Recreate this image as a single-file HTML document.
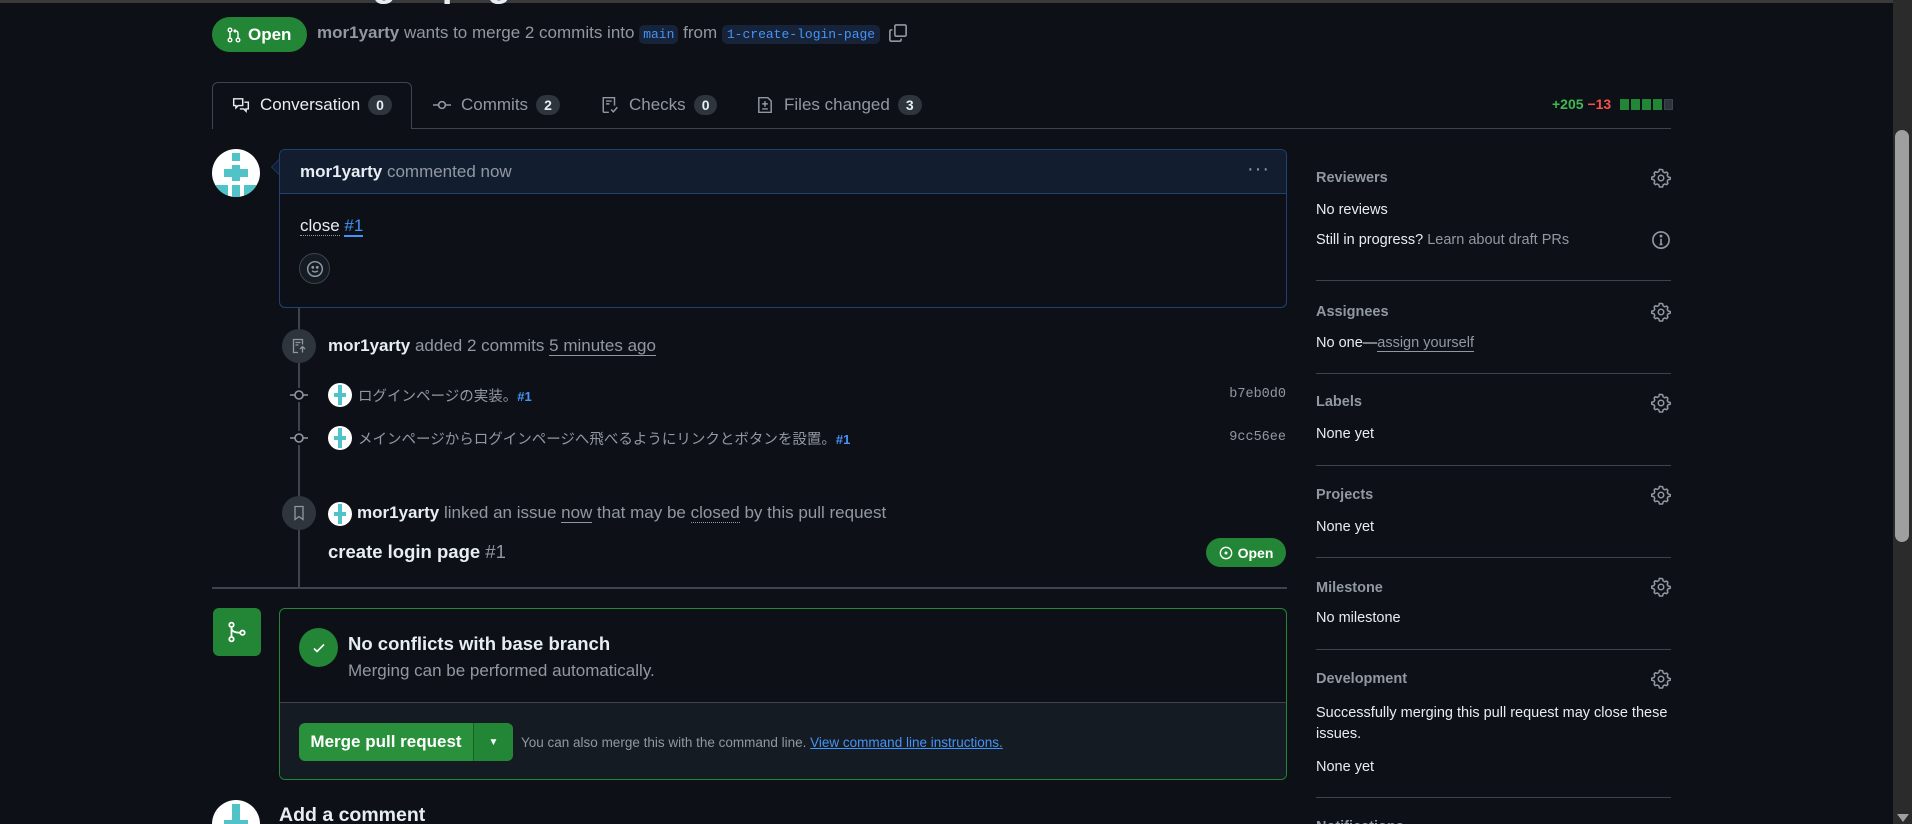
<!DOCTYPE html>
<html><head><meta charset="utf-8"><style>
*{box-sizing:border-box;margin:0;padding:0}
html{width:1912px;height:824px;overflow:hidden;background:#0d1117}
body{width:1912px;height:824px;overflow:hidden;background:#0d1117;color:#e6edf3;font-family:"Liberation Sans","Noto Sans CJK JP",sans-serif;font-size:17px;position:relative}
.a{position:absolute}
.mut{color:#9198a1}
.b{font-weight:bold}
.blue{color:#4493f8}
.mono{font-family:"Liberation Mono",monospace}
.cnt{display:inline-block;background:#2f353d;color:#e6edf3;border-radius:12px;font-size:14px;padding:2px 8px;margin-left:8px;font-weight:bold}
.tab{position:absolute;top:82px;height:46px;display:flex;align-items:center;color:#9198a1;font-size:17px}
.tab svg{margin-right:10px}
.sh{position:absolute;left:1316px;font-size:14.5px;color:#9198a1;font-weight:bold}
.sv{position:absolute;left:1316px;font-size:14.5px;color:#e6edf3}
.dv{position:absolute;left:1316px;width:355px;height:1px;background:#3d444d}
.gear{position:absolute;left:1651px}
.av{position:absolute;border-radius:50%;background:#fff;overflow:hidden}
</style></head><body>
<div class="a" style="left:0;top:0;width:1912px;height:3px;background:#3a3a3a"></div>
<div class="a b" style="left:212px;top:-38px;font-size:39px;color:#e6edf3">create login page <span class="mut" style="font-weight:normal">#2</span></div>

<div class="a" style="left:212px;top:17px;width:95px;height:35px;border-radius:18px;background:#238636;color:#fff;font-weight:bold;display:flex;align-items:center;padding-left:14px;font-size:17px">
<svg width="16" height="16" viewBox="0 0 16 16" fill="none" stroke="#fff" stroke-width="1.4" style="margin-right:6px"><circle cx="4" cy="3" r="1.8"/><circle cx="4" cy="13" r="1.8"/><circle cx="12" cy="13" r="1.8"/><path d="M4 5v6M12 11V6a2 2 0 0 0-2-2H8M9.5 2.5 8 4l1.5 1.5"/></svg>Open</div>
<div class="a mut" style="left:317px;top:23px;font-size:17px"><span class="b" style="color:#9198a1">mor1yarty</span> wants to merge 2 commits into <span class="mono blue" style="background:#172339;padding:2px 4px;border-radius:5px;font-size:13px">main</span> from <span class="mono blue" style="background:#172339;padding:2px 5px;border-radius:5px;font-size:13px">1-create-login-page</span></div>
<svg class="a" style="left:888px;top:23px" width="20" height="20" viewBox="0 0 16 16" fill="none" stroke="#9198a1" stroke-width="1.3"><rect x="5.5" y="1.5" width="9" height="9" rx="1"/><path d="M3.5 5.5h-1a1 1 0 0 0-1 1v7a1 1 0 0 0 1 1h7a1 1 0 0 0 1-1v-1"/></svg>

<div class="a" style="left:212px;top:82px;width:200px;height:47px;border:1px solid #3d444d;border-bottom:none;border-radius:6px 6px 0 0;background:#0d1117;z-index:2"></div>
<div class="a" style="left:212px;top:128px;width:1459px;height:1px;background:#3d444d"></div>
<div class="tab" style="left:232px;color:#e6edf3;z-index:3"><svg width="18" height="18" viewBox="0 0 16 16" fill="none" stroke="#e6edf3" stroke-width="1.3"><path d="M1.5 2.5h8v6h-4l-2 2v-2h-2z"/><path d="M11 5.5h3.5v6h-2v2l-2-2H7"/></svg>Conversation<span class="cnt">0</span></div>
<div class="tab" style="left:433px"><svg width="18" height="18" viewBox="0 0 16 16" fill="none" stroke="#9198a1" stroke-width="1.4"><circle cx="8" cy="8" r="3"/><path d="M0 8h5M11 8h5"/></svg>Commits<span class="cnt">2</span></div>
<div class="tab" style="left:601px"><svg width="18" height="18" viewBox="0 0 16 16" fill="none" stroke="#9198a1" stroke-width="1.3"><path d="M7 14.5H3a1 1 0 0 1-1-1v-12h10v7M4.5 4.5h5M4.5 7h3M9 12l2 2 3.5-4"/></svg>Checks<span class="cnt">0</span></div>
<div class="tab" style="left:756px"><svg width="18" height="18" viewBox="0 0 16 16" fill="none" stroke="#9198a1" stroke-width="1.3"><path d="M2.5 1.5h8l3 3v10h-11z M8 4.5v5M5.5 7h5M5.5 11.5h5"/></svg>Files changed<span class="cnt">3</span></div>
<div class="a b" style="left:1552px;top:96px;font-size:14px"><span style="color:#3fb950">+205</span> <span style="color:#f85149">−13</span></div>
<div class="a" style="left:1620px;top:99px;display:flex;gap:2px"><i style="width:9px;height:11px;background:#238636"></i><i style="width:9px;height:11px;background:#238636"></i><i style="width:9px;height:11px;background:#238636"></i><i style="width:9px;height:11px;background:#238636"></i><i style="width:9px;height:11px;background:#2f353d;border:1px solid #3d444d"></i></div>

<div class="av" style="left:212px;top:149px;width:48px;height:48px"><svg width="48" height="48" viewBox="0 0 12 12"><rect x="5" y="1" width="2" height="10" fill="#4fc3c8"/><rect x="3" y="5" width="6" height="2" fill="#4fc3c8"/><rect x="0" y="9" width="12" height="3" fill="#4fc3c8"/><rect x="5" y="3" width="2" height="1" fill="#fff"/><rect x="5" y="8" width="2" height="1" fill="#fff"/><rect x="4" y="9" width="1" height="3" fill="#fff"/><rect x="7" y="9" width="1" height="3" fill="#fff"/></svg></div>

<div class="a" style="left:279px;top:149px;width:1008px;height:159px;border:1px solid #1f4273;border-radius:6px;overflow:hidden">
<div style="height:44px;background:#121d2f;border-bottom:1px solid #1f4273;display:flex;align-items:center;padding-left:20px"><span class="b">mor1yarty</span>&nbsp;<span class="mut">commented now</span><span class="a mut" style="right:16px;top:8px;font-size:20px;letter-spacing:1px">···</span></div>
<div style="padding:22px 20px 0"><span style="border-bottom:1px dotted #9198a1">close</span> <span class="blue" style="border-bottom:2px solid #4493f8">#1</span></div>
<div style="margin:17px 0 0 19px;width:31px;height:31px;border-radius:50%;border:1px solid #3d444d;background:#151b23;display:flex;align-items:center;justify-content:center"><svg width="18" height="18" viewBox="0 0 16 16" fill="none" stroke="#9198a1" stroke-width="1.3"><circle cx="8" cy="8" r="6.5"/><path d="M5.5 9.5c1.3 1.5 3.7 1.5 5 0"/><circle cx="6" cy="6.5" r=".6" fill="#9198a1"/><circle cx="10" cy="6.5" r=".6" fill="#9198a1"/></svg></div>
</div>
<div class="a" style="left:263px;top:159px;width:0;height:0;border:8px solid transparent;border-right-color:#1f4273"></div>
<div class="a" style="left:265px;top:160px;width:0;height:0;border:7px solid transparent;border-right-color:#121d2f"></div>

<div class="a" style="left:298px;top:308px;width:2px;height:280px;background:#3d444d"></div>
<div class="a" style="left:282px;top:329px;width:34px;height:34px;border-radius:50%;background:#2f353d;display:flex;align-items:center;justify-content:center"><svg width="16" height="16" viewBox="0 0 16 16" fill="none" stroke="#9198a1" stroke-width="1.3"><path d="M7 14.5H2.5v-13h9v5M4.5 4.5h5M4.5 7h3M11.5 14.5v-6M9 11l2.5-2.5L14 11"/></svg></div>
<div class="a" style="left:328px;top:336px"><span class="b">mor1yarty</span> <span class="mut">added 2 commits <span style="border-bottom:1px solid #9198a1">5 minutes ago</span></span></div>

<div class="a" style="left:290px;top:388px;width:18px;height:14px;background:#0d1117"></div>
<svg class="a" style="left:290px;top:388px" width="18" height="14"><circle cx="9" cy="7" r="4" fill="none" stroke="#9198a1" stroke-width="1.6"/><path d="M0 7h5M13 7h5" stroke="#9198a1" stroke-width="1.6"/></svg>
<div class="av" style="left:328px;top:383px;width:24px;height:24px"><svg width="24" height="24" viewBox="0 0 12 12"><rect x="5" y="1" width="2" height="10" fill="#4fc3c8"/><rect x="3" y="5" width="6" height="2" fill="#4fc3c8"/></svg></div>
<div class="a mut" style="left:358px;top:385px;font-size:14.5px">ログインページの実装。<span class="blue b" style="font-size:13px">#1</span></div>
<div class="a mut mono" style="left:1180px;width:106px;text-align:right;top:387px;font-size:13.5px">b7eb0d0</div>

<div class="a" style="left:290px;top:431px;width:18px;height:14px;background:#0d1117"></div>
<svg class="a" style="left:290px;top:431px" width="18" height="14"><circle cx="9" cy="7" r="4" fill="none" stroke="#9198a1" stroke-width="1.6"/><path d="M0 7h5M13 7h5" stroke="#9198a1" stroke-width="1.6"/></svg>
<div class="av" style="left:328px;top:426px;width:24px;height:24px"><svg width="24" height="24" viewBox="0 0 12 12"><rect x="5" y="1" width="2" height="10" fill="#4fc3c8"/><rect x="3" y="5" width="6" height="2" fill="#4fc3c8"/></svg></div>
<div class="a mut" style="left:358px;top:428px;font-size:14.5px">メインページからログインページへ飛べるようにリンクとボタンを設置。<span class="blue b" style="font-size:13px">#1</span></div>
<div class="a mut mono" style="left:1180px;width:106px;text-align:right;top:430px;font-size:13.5px">9cc56ee</div>

<div class="a" style="left:282px;top:496px;width:34px;height:34px;border-radius:50%;background:#2f353d;display:flex;align-items:center;justify-content:center"><svg width="16" height="16" viewBox="0 0 16 16" fill="none" stroke="#9198a1" stroke-width="1.3"><path d="M4 1.5h8v13l-4-3-4 3z"/></svg></div>
<div class="av" style="left:328px;top:502px;width:24px;height:24px"><svg width="24" height="24" viewBox="0 0 12 12"><rect x="5" y="1" width="2" height="10" fill="#4fc3c8"/><rect x="3" y="5" width="6" height="2" fill="#4fc3c8"/></svg></div>
<div class="a" style="left:357px;top:503px"><span class="b">mor1yarty</span> <span class="mut">linked an issue <span style="border-bottom:1px solid #9198a1">now</span> that may be <span style="border-bottom:1px dotted #9198a1">closed</span> by this pull request</span></div>
<div class="a" style="left:328px;top:541px;font-size:18.5px"><span class="b">create login page</span> <span class="mut">#1</span></div>
<div class="a b" style="left:1206px;top:538px;width:80px;height:29px;border-radius:15px;background:#238636;color:#fff;font-size:14px;display:flex;align-items:center;justify-content:center"><svg width="14" height="14" viewBox="0 0 16 16" fill="none" stroke="#fff" stroke-width="1.5" style="margin-right:5px"><circle cx="8" cy="8" r="6.5"/><circle cx="8" cy="8" r="1" fill="#fff"/></svg>Open</div>
<div class="a" style="left:212px;top:587px;width:1075px;height:2px;background:#3d444d"></div>

<div class="a" style="left:213px;top:608px;width:48px;height:48px;border-radius:6px;background:#238636;display:flex;align-items:center;justify-content:center"><svg width="22" height="22" viewBox="0 0 16 16" fill="none" stroke="#fff" stroke-width="1.3"><circle cx="4" cy="2.8" r="1.6"/><circle cx="4" cy="13.2" r="1.6"/><circle cx="12" cy="8.5" r="1.6"/><path d="M4 4.4v7.2M4 5c0 3 3 3.5 6.4 3.5"/></svg></div>
<div class="a" style="left:279px;top:608px;width:1008px;height:172px;border:1px solid #238636;border-radius:6px;overflow:hidden">
<div style="height:94px;position:relative;border-bottom:1px solid #3d444d">
<div class="a" style="left:19px;top:19px;width:39px;height:39px;border-radius:50%;background:#238636;display:flex;align-items:center;justify-content:center"><svg width="16" height="16" viewBox="0 0 16 16" fill="none" stroke="#fff" stroke-width="1.6"><path d="M3 8.5l3 3 7-7"/></svg></div>
<div class="a b" style="left:68px;top:24px;font-size:18.5px">No conflicts with base branch</div>
<div class="a mut" style="left:68px;top:52px;font-size:17px">Merging can be performed automatically.</div>
</div>
<div style="height:78px;background:#151b23;position:relative">
<div class="a b" style="left:19px;top:20px;width:214px;height:38px;border-radius:6px;background:#29903b;color:#fff;display:flex;align-items:center;font-size:17px"><span style="width:174px;text-align:center">Merge pull request</span><span style="width:40px;height:38px;border-left:1px solid #1a5e28;background:#238636;border-radius:0 6px 6px 0;display:flex;align-items:center;justify-content:center;font-size:10px">▼</span></div>
<div class="a mut" style="left:241px;top:32px;font-size:13.5px">You can also merge this with the command line. <span class="blue" style="text-decoration:underline">View command line instructions.</span></div>
</div>
</div>
<div class="av" style="left:212px;top:800px;width:48px;height:48px"><svg width="48" height="48" viewBox="0 0 12 12"><rect x="5" y="1" width="2" height="10" fill="#4fc3c8"/><rect x="3" y="5" width="6" height="2" fill="#4fc3c8"/></svg></div>
<div class="a b" style="left:279px;top:804px;font-size:19.5px">Add a comment</div>

<div class="sh" style="top:170px">Reviewers</div>
<div class="sv" style="top:202px">No reviews</div>
<div class="sv" style="top:232px">Still in progress? <span class="mut">Learn about draft PRs</span></div>
<svg class="gear" style="top:230px" width="20" height="20" viewBox="0 0 16 16" fill="none" stroke="#9198a1" stroke-width="1.3"><circle cx="8" cy="8" r="6.5"/><path d="M8 7v4.5M6.8 11.5h2.4"/><circle cx="8" cy="4.8" r=".5" fill="#9198a1"/></svg>
<div class="dv" style="top:280px"></div>
<div class="sh" style="top:304px">Assignees</div>
<div class="sv" style="top:335px">No one—<span class="mut" style="border-bottom:1px solid #9198a1">assign yourself</span></div>
<div class="dv" style="top:373px"></div>
<div class="sh" style="top:394px">Labels</div>
<div class="sv" style="top:426px">None yet</div>
<div class="dv" style="top:465px"></div>
<div class="sh" style="top:487px">Projects</div>
<div class="sv" style="top:519px">None yet</div>
<div class="dv" style="top:557px"></div>
<div class="sh" style="top:580px">Milestone</div>
<div class="sv" style="top:610px">No milestone</div>
<div class="dv" style="top:649px"></div>
<div class="sh" style="top:671px">Development</div>
<div class="sv" style="top:703px;line-height:21px;width:355px">Successfully merging this pull request may close these issues.</div>
<div class="sv" style="top:759px">None yet</div>
<div class="dv" style="top:797px"></div>
<div class="sh" style="top:819px">Notifications</div>

<svg width="0" height="0" style="position:absolute"><defs><g id="g"><path d="M8 1.2l1.3.2.4 1.7 1.2.7 1.7-.5.9 1-.5 1.7.7 1.2 1.7.4v1.4l-1.7.4-.7 1.2.5 1.7-.9 1-1.7-.5-1.2.7-.4 1.7H6.7l-.4-1.7-1.2-.7-1.7.5-.9-1 .5-1.7-.7-1.2-1.7-.4V7.3l1.7-.4.7-1.2-.5-1.7.9-1 1.7.5 1.2-.7.4-1.7z" fill="none" stroke="#9198a1" stroke-width="1.2" stroke-linejoin="round"/><circle cx="8" cy="8" r="2.2" fill="none" stroke="#9198a1" stroke-width="1.2"/></g></defs></svg>
<svg class="gear" style="top:168px" width="20" height="20" viewBox="0 0 16 16"><use href="#g"/></svg>
<svg class="gear" style="top:302px" width="20" height="20" viewBox="0 0 16 16"><use href="#g"/></svg>
<svg class="gear" style="top:393px" width="20" height="20" viewBox="0 0 16 16"><use href="#g"/></svg>
<svg class="gear" style="top:485px" width="20" height="20" viewBox="0 0 16 16"><use href="#g"/></svg>
<svg class="gear" style="top:577px" width="20" height="20" viewBox="0 0 16 16"><use href="#g"/></svg>
<svg class="gear" style="top:669px" width="20" height="20" viewBox="0 0 16 16"><use href="#g"/></svg>

<div class="a" style="left:1893px;top:0;width:19px;height:824px;background:#2b2b2b"></div>
<div class="a" style="left:1895px;top:130px;width:14px;height:412px;border-radius:7px;background:#9f9f9f"></div>
<div class="a" style="left:1897px;top:814px;width:0;height:0;border-left:6px solid transparent;border-right:6px solid transparent;border-top:8px solid #9f9f9f"></div>
</body></html>
